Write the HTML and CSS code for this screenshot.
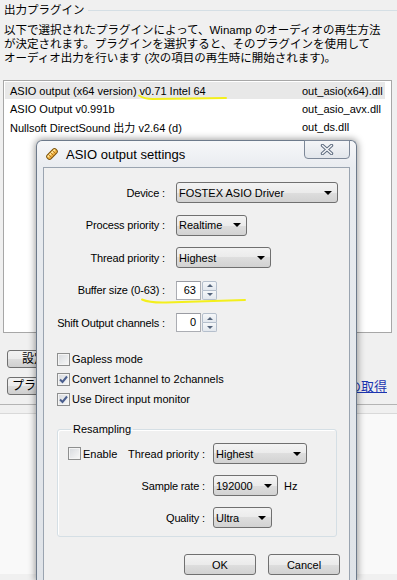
FILE: index.html
```html
<!DOCTYPE html>
<html lang="ja">
<head>
<meta charset="utf-8">
<title>出力プラグイン</title>
<link rel="stylesheet" href="styles.css">
</head>
<body>
<div class="page">
  <div class="hdr"><span class="hdr-title">出力プラグイン</span><span class="hdr-line"></span></div>
  <p class="desc">以下で選択されたプラグインによって、Winamp のオーディオの再生方法<br>が決定されます。プラグインを選択すると、そのプラグインを使用して<br>オーディオ出力を行います (次の項目の再生時に開始されます)。</p>
  <div class="list">
    <div class="row sel"><span class="name">ASIO output (x64 version) v0.71 Intel 64</span><span class="file">out_asio(x64).dll</span></div>
    <div class="row"><span class="name">ASIO Output v0.991b</span><span class="file">out_asio_avx.dll</span></div>
    <div class="row"><span class="name">Nullsoft DirectSound 出力 v2.64 (d)</span><span class="file">out_ds.dll</span></div>
  </div>
  <div class="actions">
    <button class="pbtn b1">設定</button>
    <div class="act-row">
      <button class="pbtn b2">プラグ</button>
      <a class="link" href="#">の取得</a>
    </div>
  </div>
  <div class="bottom"><div class="bottom-inner"></div></div>
</div>

<div class="dialog">
  <div class="titlebar">
    <svg class="app-icon" width="14" height="14" viewBox="0 0 14 14">
      <g transform="rotate(-45 7 7)">
        <rect x="0.8" y="4.3" width="12.4" height="5.4" rx="2.4" fill="#f2b444" stroke="#7a5512" stroke-width="1"/>
        <rect x="1.8" y="5.2" width="10.4" height="1.6" rx="0.8" fill="#fde59a"/>
        <path d="M4.2 4.5v5M7 4.5v5M9.8 4.5v5" stroke="#a86a18" stroke-width="0.8"/>
      </g>
    </svg>
    <span class="title">ASIO output settings</span>
    <div class="close">
      <svg width="14" height="11" viewBox="0 0 14 11">
        <path d="M2.5 1.5 L11.5 9.5 M11.5 1.5 L2.5 9.5" stroke="#5f6d80" stroke-width="3.4" stroke-linecap="round"/>
        <path d="M2.5 1.5 L11.5 9.5 M11.5 1.5 L2.5 9.5" stroke="#f7f8fa" stroke-width="1.4" stroke-linecap="round"/>
      </svg>
    </div>
  </div>
  <div class="client">
    <div class="form">
      <span class="lbl">Device :</span>
      <div class="combo w-device"><span>FOSTEX ASIO Driver</span></div>
      <span class="lbl">Process priority :</span>
      <div class="combo w-process"><span>Realtime</span></div>
      <span class="lbl">Thread priority :</span>
      <div class="combo w-thread"><span>Highest</span></div>
      <span class="lbl">Buffer size (0-63) :</span>
      <div class="spin"><span class="spin-input">63</span><span class="spin-btns"><span class="spin-btn up"></span><span class="spin-btn down"></span></span></div>
      <span class="lbl">Shift Output channels :</span>
      <div class="spin"><span class="spin-input">0</span><span class="spin-btns"><span class="spin-btn up"></span><span class="spin-btn down"></span></span></div>
    </div>

    <div class="checks">
      <label class="chk"><span class="box"></span><span>Gapless mode</span></label>
      <label class="chk"><span class="box"><svg width="11" height="11" viewBox="0 0 11 11"><path d="M2 5.5 L4.5 8 L9 2.5" fill="none" stroke="#4b5f8e" stroke-width="2"/></svg></span><span>Convert 1channel to 2channels</span></label>
      <label class="chk"><span class="box"><svg width="11" height="11" viewBox="0 0 11 11"><path d="M2 5.5 L4.5 8 L9 2.5" fill="none" stroke="#4b5f8e" stroke-width="2"/></svg></span><span>Use Direct input monitor</span></label>
    </div>

    <fieldset class="group">
      <legend>Resampling</legend>
      <div class="rgrid">
        <div class="enable-cell">
          <label class="chk"><span class="box"></span><span>Enable</span></label>
          <span>Thread priority :</span>
        </div>
        <div class="combo w-rthread"><span>Highest</span></div>
        <span class="lbl">Sample rate :</span>
        <div class="ctl"><div class="combo w-rate"><span>192000</span></div><span class="hz">Hz</span></div>
        <span class="lbl">Quality :</span>
        <div class="combo w-quality"><span>Ultra</span></div>
      </div>
    </fieldset>

    <div class="btns">
      <button class="dbtn">OK</button>
      <button class="dbtn">Cancel</button>
    </div>
  </div>
</div>

<svg class="marks" width="397" height="580" viewBox="0 0 397 580">
  <path d="M139 95.5 Q144 99 153 99 L226 98" fill="none" stroke="#f3ef1c" stroke-width="2" stroke-linecap="round"/>
  <path d="M142 299.5 Q150 303 166 302.5 L245 300" fill="none" stroke="#f3ef1c" stroke-width="2" stroke-linecap="round"/>
</svg>
</body>
</html>
```

FILE: styles.css
```css
html, body {
  margin: 0;
  padding: 0;
}

html {
  width: 397px;
  height: 580px;
  overflow: hidden;
}

body {
  width: 397px;
  height: 580px;
  overflow: hidden;
  position: relative;
  background: #f0f0f0;
  color: #000;
  font-family: "Liberation Sans", "Noto Sans CJK JP", sans-serif;
  font-size: 11px;
}

/* ---------- background page ---------- */
.hdr {
  display: flex;
  align-items: center;
  height: 14px;
  padding: 3px 0 0 4px;
}

.hdr-title {
  font-size: 11.5px;
  line-height: 14px;
}

.hdr-line {
  flex: 1;
  height: 1px;
  margin-left: 3px;
  background: #d5dfe5;
}

.desc {
  margin: 6px 0 0 4px;
  font-size: 11.5px;
  line-height: 14px;
  white-space: nowrap;
}

.list {
  margin: 15px 0 0 3px;
  width: 389px;
  height: 253px;
  box-sizing: border-box;
  border: 1px solid #a7a7a7;
  background: #fff;
  padding: 1px 0 0 1px;
}

.row {
  display: grid;
  grid-template-columns: 292px auto;
  align-items: center;
  width: 380px;
  height: 17px;
  margin-bottom: 1px;
  padding-left: 5px;
  box-sizing: border-box;
  font-size: 11px;
  white-space: nowrap;
}

.row.sel {
  background: #e8e8e8;
}

.actions {
  margin-top: 17px;
}

.pbtn {
  display: block;
  height: 18px;
  width: 90px;
  margin: 0 0 0 7px;
  box-sizing: border-box;
  border: 1px solid #707070;
  border-radius: 3px;
  background: linear-gradient(#f2f2f2 0%, #ebebeb 50%, #dddddd 50%, #cfcfcf 100%);
  font-family: "Liberation Sans", "Noto Sans CJK JP", sans-serif;
  font-size: 12px;
  line-height: 14px;
  text-align: left;
  white-space: nowrap;
  overflow: hidden;
  color: #000;
}

.b1 {
  padding: 0 0 0 14px;
}

.b2 {
  padding: 0 0 0 4px;
}

.act-row {
  display: flex;
  align-items: center;
  justify-content: space-between;
  margin-top: 8px;
}

.link {
  font-size: 13px;
  color: #1c35b0;
  text-decoration: underline;
  margin-right: 10px;
}

.bottom {
  margin-top: 9px;
  border-top: 1px solid #b4b4b4;
  padding-top: 8px;
}

.bottom-inner {
  height: 160px;
  border-top: 1px solid #d9d9d9;
  background: #f9f9f9;
}

/* ---------- dialog window ---------- */
.dialog {
  position: absolute;
  left: 36px;
  top: 140px;
  width: 321px;
  height: 440px;
  box-sizing: border-box;
  display: flex;
  flex-direction: column;
  padding: 0 6px;
  border: 1px solid #6d7a8b;
  border-bottom: none;
  border-radius: 6px 6px 0 0;
  background: linear-gradient(#f6f7f9 0px, #e9ecf0 26px, #dfe3e8 100%);
  box-shadow: 0 0 7px 1px rgba(0, 0, 0, 0.38);
}

.titlebar {
  display: flex;
  align-items: center;
  height: 26px;
  padding-left: 2px;
}

.app-icon {
  flex: none;
}

.title {
  margin-left: 7px;
  font-size: 13px;
  color: #000;
  white-space: nowrap;
}

.close {
  margin-left: auto;
  align-self: flex-start;
  margin-top: -1px;
  width: 46px;
  height: 19px;
  box-sizing: border-box;
  border: 1px solid #7d8898;
  border-radius: 0 0 4px 4px;
  background: linear-gradient(#f4f5f7, #e2e6eb);
  display: flex;
  align-items: center;
  justify-content: center;
}

.client {
  flex: 1;
  border: 1px solid #9aa4b0;
  border-bottom: none;
  background: #f0f0f0;
  padding-top: 14px;
  overflow: hidden;
}

.form {
  display: grid;
  grid-template-columns: 121px auto;
  grid-auto-rows: 21px;
  column-gap: 11px;
  row-gap: 11.5px;
  align-items: center;
}

.lbl {
  text-align: right;
  white-space: nowrap;
  letter-spacing: -0.15px;
}

.combo {
  display: flex;
  align-items: center;
  height: 21px;
  box-sizing: border-box;
  padding-left: 2px;
  border: 1px solid #707070;
  border-radius: 3px;
  background: linear-gradient(#f3f3f3 0%, #ebebeb 50%, #dedede 50%, #d2d2d2 100%);
  white-space: nowrap;
}

.combo::after {
  content: "";
  margin-left: auto;
  margin-right: 5px;
  border-left: 4px solid transparent;
  border-right: 4px solid transparent;
  border-top: 4px solid #000;
}

.w-device { width: 162px; }
.w-process { width: 71px; }
.w-thread { width: 95px; }
.w-rthread { width: 94px; }
.w-rate { width: 65px; }
.w-quality { width: 59px; }

.spin {
  display: flex;
  height: 19px;
}

.spin-input {
  width: 25px;
  box-sizing: border-box;
  border: 1px solid #abadb3;
  border-top-color: #9a9ca3;
  background: #fff;
  text-align: right;
  padding-right: 4px;
  line-height: 17px;
}

.spin-btns {
  display: flex;
  flex-direction: column;
  width: 15px;
  margin-left: 1px;
}

.spin-btn {
  flex: 1;
  display: flex;
  align-items: center;
  justify-content: center;
  border: 1px solid #b5bfcc;
  background: linear-gradient(#f5f7f9, #e3e8ee);
}

.spin-btn.up {
  border-radius: 2px 2px 0 0;
}

.spin-btn.down {
  border-top: none;
  border-radius: 0 0 2px 2px;
}

.spin-btn.up::before {
  content: "";
  border-left: 3px solid transparent;
  border-right: 3px solid transparent;
  border-bottom: 3px solid #55657c;
}

.spin-btn.down::before {
  content: "";
  border-left: 3px solid transparent;
  border-right: 3px solid transparent;
  border-top: 3px solid #55657c;
}

.checks {
  display: flex;
  flex-direction: column;
  margin: 16px 0 0 13px;
}

.chk {
  display: flex;
  align-items: center;
  gap: 2px;
  height: 20px;
  white-space: nowrap;
}

.box {
  display: flex;
  align-items: center;
  justify-content: center;
  width: 13px;
  height: 13px;
  box-sizing: border-box;
  border: 1px solid #8e8f8f;
  background: linear-gradient(135deg, #d6d9dd, #f9f9f9);
  box-shadow: inset 0 0 0 1px #f4f4f4;
}

.group {
  margin: 14px 0 0 13px;
  width: 280px;
  box-sizing: border-box;
  padding: 7px 9px 8px 9px;
  border: 1px solid #d5dfe5;
  border-radius: 3px;
  box-shadow: inset 1px 1px 0 #fff;
  min-inline-size: 0;
}

.group legend {
  margin-left: 4px;
  padding: 0 2px;
  font-size: 11px;
  line-height: 13px;
}

.rgrid {
  display: grid;
  grid-template-columns: 138px auto;
  grid-auto-rows: 21px;
  column-gap: 8px;
  row-gap: 11px;
  align-items: center;
}

.rgrid > .combo {
  justify-self: start;
}

.enable-cell {
  display: flex;
  align-items: center;
  justify-content: space-between;
  white-space: nowrap;
}

.enable-cell .chk {
  margin-left: 1px;
}

.ctl {
  display: flex;
  align-items: center;
}

.hz {
  margin-left: 6px;
}

.form > .combo,
.form > .spin {
  justify-self: start;
}

.btns {
  display: flex;
  justify-content: flex-end;
  gap: 12px;
  margin-top: 17px;
  padding-right: 9px;
}

.dbtn {
  width: 72px;
  height: 21px;
  box-sizing: border-box;
  padding: 0;
  border: 1px solid #707070;
  border-radius: 3px;
  background: linear-gradient(#f3f3f3 0%, #ebebeb 50%, #dedede 50%, #d2d2d2 100%);
  font-family: "Liberation Sans", sans-serif;
  font-size: 11px;
  color: #000;
}

/* ---------- annotations drawn on top ---------- */
.marks {
  position: absolute;
  left: 0;
  top: 0;
  pointer-events: none;
}
```
